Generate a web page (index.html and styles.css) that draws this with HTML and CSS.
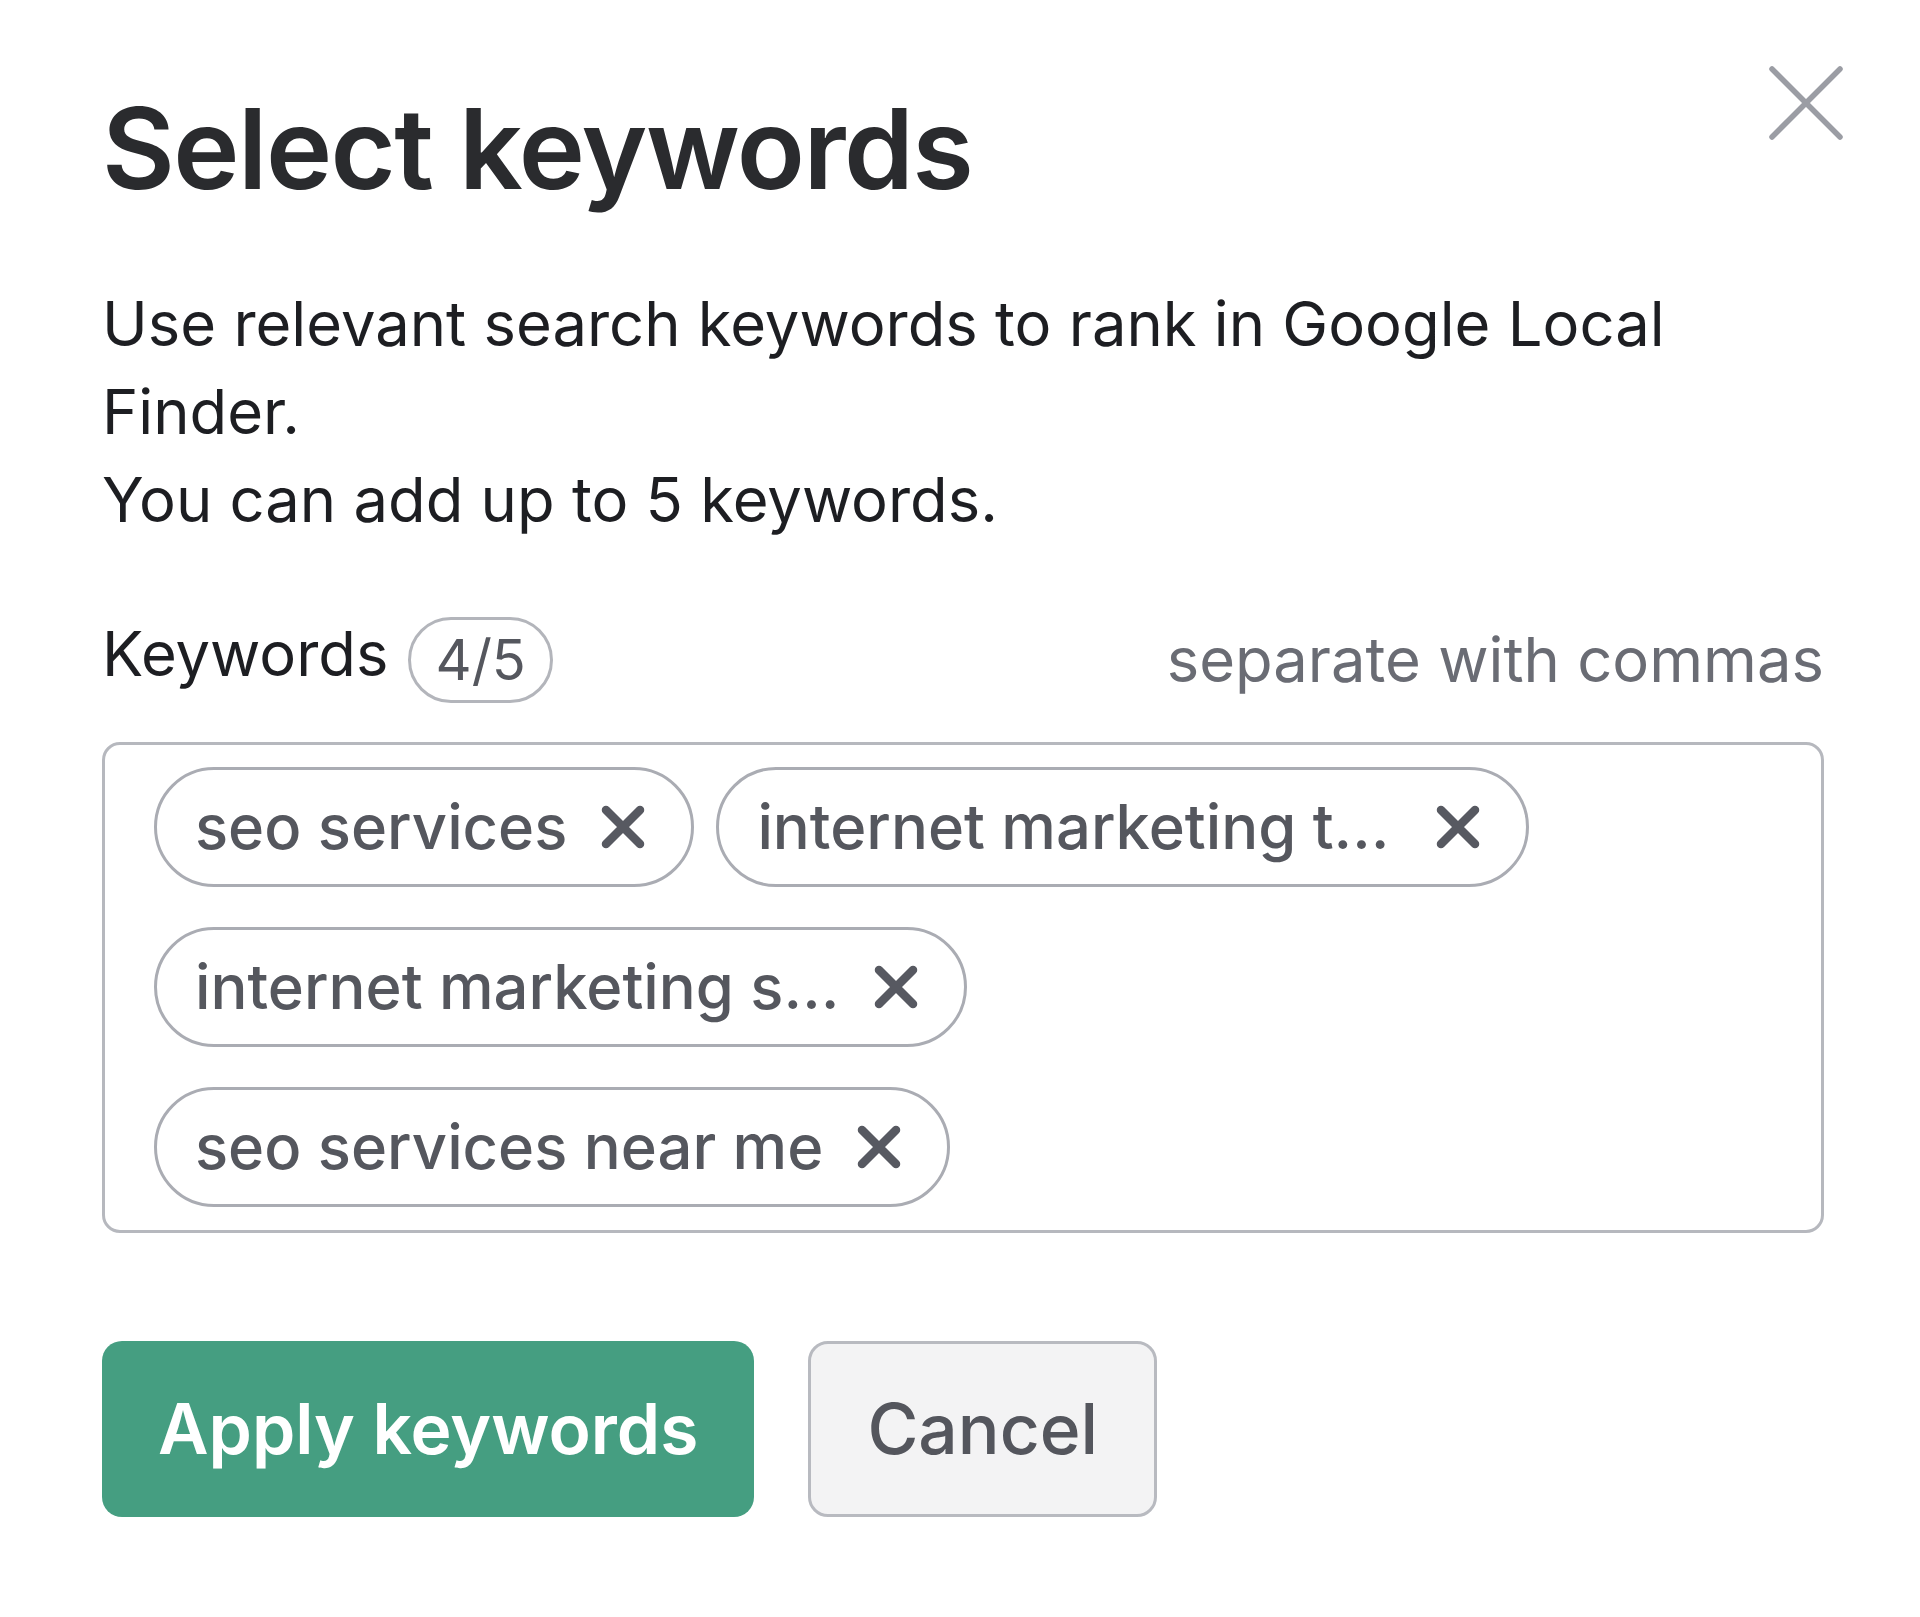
FILE: index.html
```html
<!DOCTYPE html>
<html lang="en">
<head>
<meta charset="utf-8">
<title>Select keywords</title>
<link rel="stylesheet" href="styles.css">
</head>
<body>
<div class="dialog">
  <button class="close" aria-label="Close">
    <svg viewBox="0 0 76 76" width="76" height="76"><path d="M4 4 L72 72 M72 4 L4 72" /></svg>
  </button>
  <h1 class="title">Select keywords</h1>
  <p class="desc">Use relevant search keywords to rank in Google Local Finder.<br>You can add up to 5 keywords.</p>
  <div class="field-head">
    <div class="label-group">
      <span class="label">Keywords</span>
      <span class="badge">4/5</span>
    </div>
    <span class="hint">separate with commas</span>
  </div>
  <div class="tag-box">
    <span class="chip"><span class="chip-text">seo services</span><svg class="chip-x" viewBox="0 0 44 44" width="44" height="44"><path d="M5 5 L39 39 M39 5 L5 39" /></svg></span>
    <span class="chip"><span class="chip-text trunc">internet marketing t…</span><svg class="chip-x" viewBox="0 0 44 44" width="44" height="44"><path d="M5 5 L39 39 M39 5 L5 39" /></svg></span>
    <span class="chip"><span class="chip-text trunc">internet marketing s…</span><svg class="chip-x" viewBox="0 0 44 44" width="44" height="44"><path d="M5 5 L39 39 M39 5 L5 39" /></svg></span>
    <span class="chip"><span class="chip-text">seo services near me</span><svg class="chip-x" viewBox="0 0 44 44" width="44" height="44"><path d="M5 5 L39 39 M39 5 L5 39" /></svg></span>
  </div>
  <div class="actions">
    <button class="btn primary">Apply keywords</button>
    <button class="btn secondary">Cancel</button>
  </div>
</div>
</body>
</html>
```

FILE: styles.css
```css
html, body {
  margin: 0;
  padding: 0;
  background: #ffffff;
}

body {
  font-family: Inter, "Noto Sans", "Liberation Sans", sans-serif;
  color: #1d1e22;
}

.dialog {
  position: relative;
  width: 1722px;
  padding: 80px 0 0 102px;
}

.close {
  position: absolute;
  top: 65px;
  left: 1768px;
  width: 76px;
  height: 76px;
  padding: 0;
  border: 0;
  background: transparent;
  cursor: pointer;
}

.close svg {
  display: block;
  fill: none;
  stroke: #9b9da4;
  stroke-width: 5.5;
  stroke-linecap: round;
}

.title {
  margin: 0;
  font-size: 112px;
  line-height: 136px;
  font-weight: 600;
  color: #2a2b2e;
  letter-spacing: -1.5px;
}

.desc {
  margin: 64px 0 0;
  max-width: 1700px;
  font-size: 61.5px;
  line-height: 88px;
  font-weight: 400;
  color: #1d1e22;
}

.field-head {
  display: flex;
  justify-content: space-between;
  align-items: flex-start;
  margin-top: 66px;
}

.label-group {
  display: flex;
  align-items: flex-start;
  gap: 20px;
}

.label {
  font-size: 61.5px;
  line-height: 88px;
  color: #1d1e22;
}

.badge {
  margin-top: 7px;
  box-sizing: border-box;
  height: 86px;
  padding: 0 24px;
  border: 3px solid #b3b5bb;
  border-radius: 43px;
  font-size: 56px;
  line-height: 80px;
  color: #55575e;
}

.hint {
  margin-top: 10px;
  font-size: 61.5px;
  line-height: 80px;
  color: #6a6c74;
}

.tag-box {
  box-sizing: border-box;
  display: flex;
  flex-wrap: wrap;
  align-content: flex-start;
  gap: 40px 22px;
  margin-top: 39px;
  height: 491px;
  padding: 22px 49px 23px;
  border: 3px solid #b6b8be;
  border-radius: 18px;
}

.chip {
  box-sizing: border-box;
  display: inline-flex;
  align-items: center;
  gap: 34px;
  height: 120px;
  padding: 0 46px 0 38px;
  border: 3px solid #aaacb3;
  border-radius: 60px;
  color: #55575e;
}

.chip-text {
  font-size: 61.5px;
  line-height: 80px;
  font-weight: 500;
  white-space: nowrap;
}

.chip-text.trunc {
  width: 645px;
}

.chip-x {
  display: block;
  flex: none;
  fill: none;
  stroke: #575961;
  stroke-width: 8.5;
  stroke-linecap: round;
}

.actions {
  display: flex;
  gap: 54px;
  margin-top: 108px;
}

.btn {
  box-sizing: border-box;
  height: 176px;
  padding: 0 56px;
  border-radius: 20px;
  font-family: Inter, "Noto Sans", "Liberation Sans", sans-serif;
  font-size: 69.5px;
  line-height: 88px;
  cursor: pointer;
}

.btn.primary {
  border: 0;
  background: #459e81;
  color: #ffffff;
  font-weight: 600;
}

.btn.secondary {
  border: 3px solid #b8bac0;
  background: #f3f3f4;
  color: #54565d;
  font-weight: 500;
}
```
